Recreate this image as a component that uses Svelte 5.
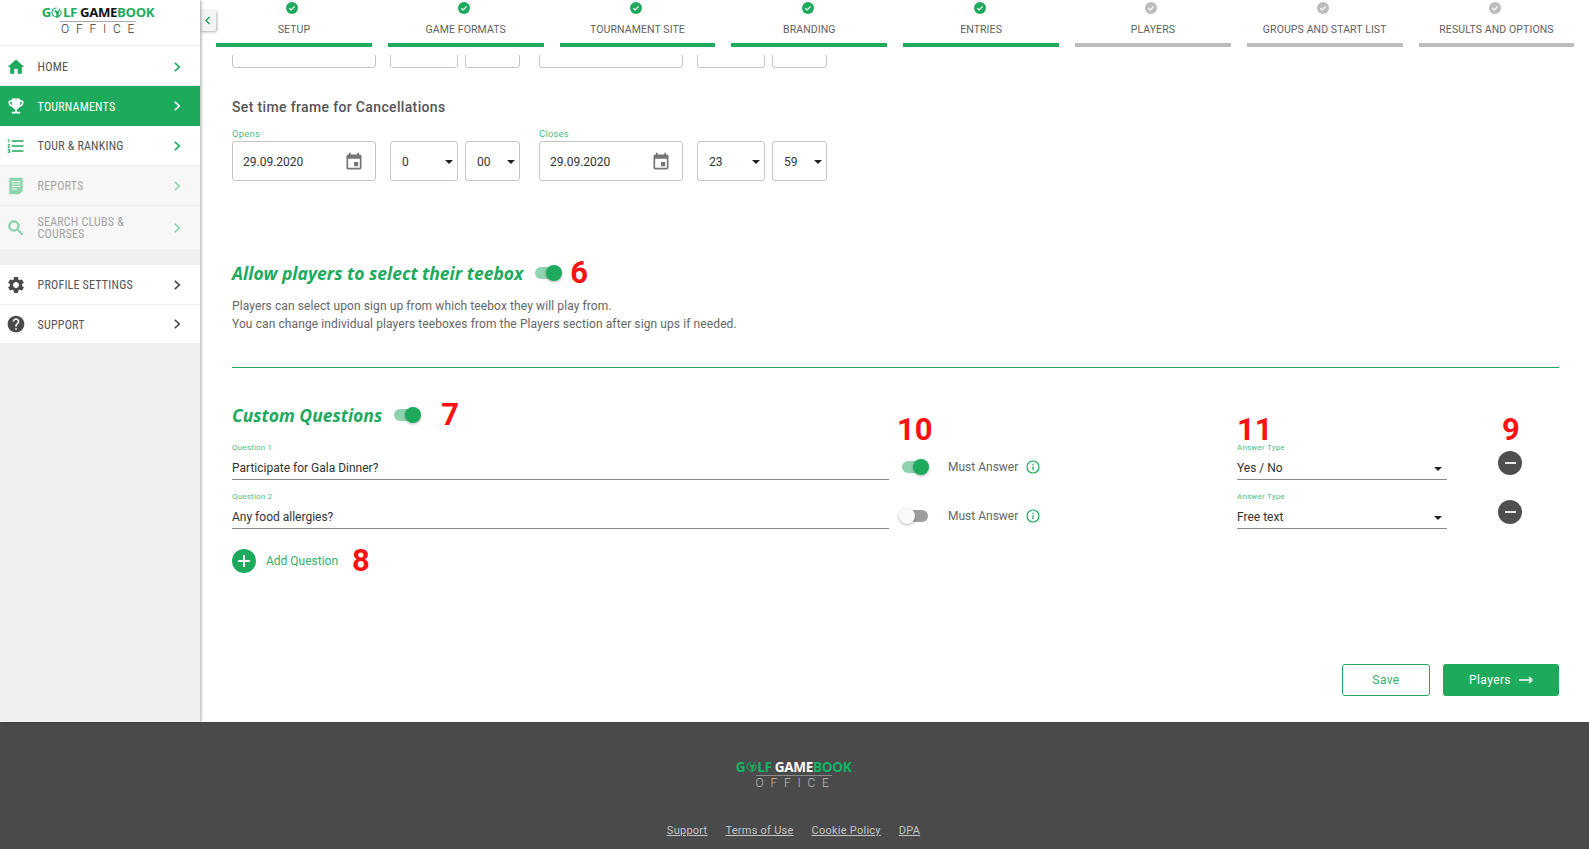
<script>
	const nav = [
		{ label: 'HOME', icon: 'home' },
		{ label: 'TOURNAMENTS', icon: 'trophy', active: true },
		{ label: 'TOUR & RANKING', icon: 'list' },
		{ label: 'REPORTS', icon: 'report', off: true },
		{ label: 'SEARCH CLUBS & COURSES', icon: 'search', off: true, tall: true }
	];
	const nav2 = [
		{ label: 'PROFILE SETTINGS', icon: 'gear', dark: true },
		{ label: 'SUPPORT', icon: 'help', dark: true }
	];
	const icons = {
		home: 'M10 20v-6h4v6h5v-8h3L12 3 2 12h3v8z',
		trophy: 'M19 5h-2V3H7v2H5c-1.1 0-2 .9-2 2v1c0 2.55 1.92 4.63 4.39 4.94.63 1.5 1.98 2.63 3.61 2.96V19H7v2h10v-2h-4v-3.1c1.63-.33 2.98-1.46 3.61-2.96C19.08 12.63 21 10.55 21 8V7c0-1.1-.9-2-2-2zM5 8V7h2v3.82C5.84 10.4 5 9.3 5 8zm14 0c0 1.3-.84 2.4-2 2.82V7h2v1z',
		list: 'M2 17h2v.5H3v1h1v.5H2v1h3v-4H2v1zm1-9h1V4H2v1h1v3zm-1 3h1.8L2 13.1v.9h3v-1H3.2L5 10.9V10H2v1zm5-6v2h14V5H7zm0 14h14v-2H7v2zm0-6h14v-2H7v2z',
		report: 'M4 2h16v16l-4 4H4zM7 6v1.2h10V6zm0 3v1.2h10V9zm0 3v1.2h10V12zm0 3v1.2h6V15z',
		search: 'M15.5 14h-.79l-.28-.27C15.41 12.59 16 11.11 16 9.5 16 5.91 13.09 3 9.5 3S3 5.91 3 9.5 5.91 16 9.5 16c1.61 0 3.09-.59 4.23-1.57l.27.28v.79l5 4.99L20.49 19l-4.99-5zm-6 0C7.01 14 5 11.99 5 9.5S7.01 5 9.5 5 14 7.01 14 9.5 11.99 14 9.5 14z',
		gear: 'M19.14 12.94c.04-.3.06-.61.06-.94 0-.32-.02-.64-.07-.94l2.03-1.58c.18-.14.23-.41.12-.61l-1.92-3.32c-.12-.22-.37-.29-.59-.22l-2.39.96c-.5-.38-1.03-.7-1.62-.94l-.36-2.54c-.04-.24-.24-.41-.48-.41h-3.84c-.24 0-.43.17-.47.41l-.36 2.54c-.59.24-1.13.57-1.62.94l-2.39-.96c-.22-.08-.47 0-.59.22L2.74 8.87c-.12.21-.08.47.12.61l2.03 1.58c-.05.3-.09.63-.09.94s.02.64.07.94l-2.03 1.58c-.18.14-.23.41-.12.61l1.92 3.32c.12.22.37.29.59.22l2.39-.96c.5.38 1.03.7 1.62.94l.36 2.54c.05.24.24.41.48.41h3.84c.24 0 .44-.17.47-.41l.36-2.54c.59-.24 1.13-.56 1.62-.94l2.39.96c.22.08.47 0 .59-.22l1.92-3.32c.12-.22.07-.47-.12-.61l-2.01-1.58zM12 15.6c-1.98 0-3.6-1.62-3.6-3.6s1.62-3.6 3.6-3.6 3.6 1.62 3.6 3.6-1.62 3.6-3.6 3.6z',
		help: 'M12 2C6.48 2 2 6.48 2 12s4.48 10 10 10 10-4.48 10-10S17.52 2 12 2zm1 17h-2v-2h2v2zm2.07-7.75l-.9.92C13.45 12.9 13 13.5 13 15h-2v-.5c0-1.1.45-2.1 1.17-2.83l1.24-1.26c.37-.36.59-.86.59-1.41 0-1.1-.9-2-2-2s-2 .9-2 2H8c0-2.21 1.79-4 4-4s4 1.79 4 4c0 .88-.36 1.68-.93 2.25z'
	};
	const calendar = 'M17 12h-5v5h5v-5zM16 1v2H8V1H6v2H5c-1.11 0-1.99.9-1.99 2L3 19c0 1.1.89 2 2 2h14c1.1 0 2-.9 2-2V5c0-1.1-.9-2-2-2h-1V1h-2zm3 18H5V8h14v11z';
	const steps = [
		{ label: 'SETUP', done: true },
		{ label: 'GAME FORMATS', done: true },
		{ label: 'TOURNAMENT SITE', done: true },
		{ label: 'BRANDING', done: true },
		{ label: 'ENTRIES', done: true },
		{ label: 'PLAYERS' },
		{ label: 'GROUPS AND START LIST' },
		{ label: 'RESULTS AND OPTIONS' }
	];
	const questions = [
		{ label: 'Question 1', text: 'Participate for Gala Dinner?', must: true, type: 'Yes / No' },
		{ label: 'Question 2', text: 'Any food allergies?', must: false, type: 'Free text' }
	];
	const links = ['Support', 'Terms of Use', 'Cookie Policy', 'DPA'];
</script>

{#snippet logo()}
	<div class="logo">
		<div class="logo-name">
			<span class="g">G</span><svg class="golfer" viewBox="0 0 14 14" width="11" height="13"><path d="M7 1.2a5.8 5.8 0 1 0 5.2 3.2" fill="none" stroke="#1daa5d" stroke-width="1.4" /><path d="M5 3.5l2.5 2 2-1.2L11 1.5l1 .6-1.6 4L9.6 9l.6 4H6.6l.4-4.2L4.4 5z" fill="#1daa5d" /></svg><span class="g">LF</span>
			<span class="game">GAME</span><span class="g book">BOOK</span>
		</div>
		<div class="logo-sub">OFFICE</div>
	</div>
{/snippet}

{#snippet navItem(item)}
	<a class="nav-item" class:active={item.active} class:off={item.off} class:tall={item.tall} class:dark={item.dark} href="#top">
		<svg class="nav-icon {item.icon}" viewBox="0 0 24 24" width="20" height="20"><path d={icons[item.icon]} /></svg>
		<span class="nav-label">{item.label}</span>
		<svg class="chev" viewBox="0 0 10 12" width="9" height="12"><path d="M2 1.5L7 6l-5 4.5" fill="none" stroke-width="1.8" /></svg>
	</a>
{/snippet}

{#snippet dateBox(value, label)}
	<div class="date">
		{#if label}<span class="tiny">{label}</span>{/if}
		<div class="box date-box">
			<span>{value}</span>
			{#if value}
				<svg viewBox="0 0 24 24" width="20" height="20"><path d={calendar} fill="#757575" /></svg>
			{/if}
		</div>
	</div>
{/snippet}

{#snippet timeBox(value, cls)}
	<div class="box time-box {cls}">
		<span>{value}</span>
		{#if value}<i class="caret"></i>{/if}
	</div>
{/snippet}

{#snippet toggle(on)}
	<span class="toggle" class:on><span class="knob"></span></span>
{/snippet}

<div class="page">
	<div class="shell">
		<aside class="sidebar">
			<div class="brand">{@render logo()}</div>
			<nav class="nav-group">
				{#each nav as item}{@render navItem(item)}{/each}
			</nav>
			<nav class="nav-group second">
				{#each nav2 as item}{@render navItem(item)}{/each}
			</nav>
		</aside>

		<main class="main">
			<button class="collapse" aria-label="Collapse">
				<svg viewBox="0 0 10 12" width="8" height="11"><path d="M7 1.5L2.5 6 7 10.5" fill="none" stroke="#1daa5d" stroke-width="1.8" /></svg>
			</button>

			<header class="stepper">
				{#each steps as step}
					<div class="step" class:done={step.done}>
						<svg viewBox="0 0 12 12" width="12" height="12"><circle cx="6" cy="6" r="6" class="dot" /><path d="M3.3 6.2l1.9 1.8 3.5-3.7" fill="none" stroke="#fff" stroke-width="1.2" /></svg>
						<span class="step-label">{step.label}</span>
						<span class="step-bar"></span>
					</div>
				{/each}
			</header>

			<section class="content">
				<div class="time-row clipped">
					{@render dateBox('', '')}
					{@render timeBox('', 'hours')}
					{@render timeBox('', 'mins')}
					{@render dateBox('', '')}
					{@render timeBox('', 'hours')}
					{@render timeBox('', 'mins')}
				</div>

				<h3 class="sub">Set time frame for Cancellations</h3>

				<div class="time-row">
					{@render dateBox('29.09.2020', 'Opens')}
					{@render timeBox('0', 'hours')}
					{@render timeBox('00', 'mins')}
					{@render dateBox('29.09.2020', 'Closes')}
					{@render timeBox('23', 'hours')}
					{@render timeBox('59', 'mins')}
				</div>

				<div class="title-row teebox">
					<h2>Allow players to select their teebox</h2>
					{@render toggle(true)}
					<span class="note">6</span>
				</div>
				<p class="copy">
					Players can select upon sign up from which teebox they will play from.<br />
					You can change individual players teeboxes from the Players section after sign ups if needed.
				</p>

				<hr />

				<div class="questions-wrap">
					<span class="note over n10">10</span>
					<span class="note over n11">11</span>
					<span class="note over n9">9</span>

					<div class="title-row custom">
						<h2>Custom Questions</h2>
						{@render toggle(true)}
						<span class="note seven">7</span>
					</div>

					{#each questions as q}
						<div class="question">
							<div class="field">
								<span class="micro">{q.label}</span>
								<div class="line">{q.text}</div>
							</div>
							<div class="must">
								{@render toggle(q.must)}
								<span class="must-label">Must Answer</span>
								<svg viewBox="0 0 14 14" width="14" height="14"><circle cx="7" cy="7" r="6" fill="none" stroke="#1daa5d" stroke-width="1.2" /><path d="M7 6.2v4M7 3.7v1.4" stroke="#1daa5d" stroke-width="1.3" /></svg>
							</div>
							<div class="field">
								<span class="micro">Answer Type</span>
								<div class="line select">{q.type}<i class="caret"></i></div>
							</div>
							<button class="minus" aria-label="Remove"><span></span></button>
						</div>
					{/each}

					<div class="add-row">
						<span class="plus"></span>
						<span class="add-label">Add Question</span>
						<span class="note eight">8</span>
					</div>
				</div>

				<div class="actions">
					<button class="btn ghost">Save</button>
					<button class="btn solid">
						Players
						<svg viewBox="0 0 14 8" width="14" height="8"><path d="M0 4h12.5M10 1l3 3-3 3" fill="none" stroke="#fff" stroke-width="1.5" /></svg>
					</button>
				</div>
			</section>
		</main>
	</div>

	<footer class="footer">
		{@render logo()}
		<div class="links">
			{#each links as link}<a href="#top">{link}</a>{/each}
		</div>
	</footer>
</div>

<style>
	:global(body) {
		margin: 0;
		background: #fff;
		font-family: Roboto, 'Liberation Sans', sans-serif;
		color: #4a4a4a;
	}

	.page {
		width: 1589px;
		height: 849px;
		display: flex;
		flex-direction: column;
		overflow: hidden;
	}

	.shell {
		display: flex;
		height: 722px;
	}

	/* sidebar */
	.sidebar {
		width: 200px;
		flex: none;
		background: #f0f0f0;
		box-shadow: 1px 0 3px rgba(0, 0, 0, 0.35);
		position: relative;
		z-index: 2;
	}

	.brand {
		height: 45px;
		background: #fff;
		border-bottom: 1px solid #eee;
		display: flex;
		justify-content: center;
		align-items: flex-start;
		padding-right: 4px;
	}

	.logo {
		width: 113px;
		display: flex;
		flex-direction: column;
		align-items: center;
		padding-top: 5px;
	}

	.logo-name {
		display: flex;
		align-items: center;
		height: 15px;
		font-family: 'Open Sans', sans-serif;
		font-weight: 700;
		font-size: 13.2px;
		letter-spacing: -0.35px;
		line-height: 15px;
		white-space: nowrap;
		color: #111;
	}

	.g {
		color: #1daa5d;
	}

	.game {
		margin-left: 3px;
	}

	.golfer {
		margin: 0 0.5px;
	}

	.logo-sub {
		width: 76px;
		border-top: 1px solid #aaa;
		margin-top: 1px;
		font-size: 12px;
		line-height: 15px;
		font-weight: 300;
		letter-spacing: 6.8px;
		text-indent: 1px;
		white-space: nowrap;
		color: #333;
	}

	.nav-group {
		display: flex;
		flex-direction: column;
	}

	.second {
		margin-top: 16px;
	}

	.nav-item {
		height: 40px;
		box-sizing: border-box;
		display: flex;
		align-items: center;
		padding: 0 18px 0 6px;
		background: #fff;
		border-bottom: 1px solid #eee;
		text-decoration: none;
		color: #555;
		fill: #1daa5d;
		stroke: #1daa5d;
	}

	.nav-group:not(.second) .nav-item:first-child {
		padding-top: 2px;
	}

	.nav-item.tall {
		height: 43px;
		border-bottom: 0;
	}

	.nav-item.dark {
		fill: #4a4a4a;
		stroke: #4a4a4a;
	}

	.nav-item.dark:last-child {
		height: 38px;
		border-bottom: 0;
	}

	.nav-item.active {
		background: #1daa5d;
		color: #fff;
		fill: #fff;
		stroke: #fff;
		border-bottom: 0;
	}

	.nav-item.off {
		background: #f7f7f7;
		color: #a4a4a4;
		fill: #8ed4ae;
		stroke: #8ed4ae;
	}

	.nav-icon {
		stroke: none;
		flex: none;
		margin-right: 11.6px;
	}

	.nav-icon.search {
		stroke: #8ed4ae;
		stroke-width: 0.9;
	}

	.nav-label {
		flex: 1;
		font-size: 12px;
		line-height: 12px;
		letter-spacing: 0.2px;
		font-family: 'Roboto Condensed', 'Liberation Sans Narrow', Roboto, sans-serif;
		max-width: 100px;
		margin-right: auto;
		padding-top: 1px;
	}

	.chev {
		flex: none;
		margin-left: auto;
	}

	/* main */
	.main {
		flex: 1;
		display: flex;
		flex-direction: column;
		position: relative;
		min-width: 0;
	}

	.collapse {
		position: absolute;
		left: 0;
		top: 10px;
		width: 16px;
		height: 21px;
		padding: 0;
		border: 0;
		border-radius: 0 2px 2px 0;
		background: #f4f4f4;
		box-shadow: 1px 1px 3px rgba(0, 0, 0, 0.3);
		display: flex;
		align-items: center;
		justify-content: center;
	}

	.stepper {
		height: 55px;
		flex: none;
		display: flex;
		gap: 16px;
		padding-left: 16px;
		box-sizing: border-box;
	}

	.step {
		width: 155.8px;
		height: 47px;
		display: flex;
		flex-direction: column;
		align-items: center;
		padding-top: 2px;
		box-sizing: border-box;
	}

	.step svg {
		flex: none;
		margin-left: -3px;
	}

	.dot {
		fill: #bdbdbd;
	}

	.done .dot {
		fill: #1daa5d;
	}

	.step-label {
		font-size: 10.5px;
		line-height: 13px;
		margin-top: 9px;
		color: #5f5f5f;
		letter-spacing: 0.1px;
	}

	.step-bar {
		width: 100%;
		height: 4px;
		margin-top: auto;
		background: #bdbdbd;
	}

	.done .step-bar {
		background: #1daa5d;
	}

	.content {
		flex: 1;
		padding: 0 30px 0 32px;
		display: flex;
		flex-direction: column;
	}

	.time-row {
		display: flex;
		align-items: flex-end;
	}

	.clipped {
		height: 13px;
		overflow: hidden;
		flex: none;
	}

	.sub {
		margin: 30px 0 0;
		font-size: 14px;
		line-height: 18px;
		font-weight: 500;
		color: #555;
		letter-spacing: 0.35px;
	}

	.sub + .time-row {
		margin-top: 12px;
	}

	.tiny {
		display: block;
		font-size: 9.5px;
		line-height: 12px;
		color: #4fbd82;
		letter-spacing: 0.2px;
		margin-bottom: 1px;
	}

	.box {
		height: 40px;
		box-sizing: border-box;
		border: 1px solid #c4c4c4;
		border-radius: 3px;
		display: flex;
		align-items: center;
		justify-content: space-between;
		font-size: 12px;
		color: #333;
		background: #fff;
		padding-top: 2px;
	}

	.date {
		width: 144px;
		margin-right: 14px;
	}

	.date-box {
		padding-left: 10px;
		padding-right: 11px;
	}

	.time-box {
		padding-left: 11px;
		padding-right: 4px;
	}

	.hours {
		width: 68px;
		margin-right: 7px;
	}

	.mins {
		width: 55px;
		margin-right: 19px;
	}

	.caret {
		width: 0;
		height: 0;
		border-left: 4px solid transparent;
		border-right: 4px solid transparent;
		border-top: 4px solid #222;
	}

	.title-row {
		display: flex;
		align-items: center;
	}

	.title-row h2 {
		margin: 0 11px 0 0;
		font-family: 'Open Sans', sans-serif;
		font-style: italic;
		font-weight: 700;
		font-size: 17.5px;
		line-height: 24px;
		color: #1daa5d;
	}

	.teebox {
		margin-top: 77px;
	}

	.toggle {
		display: inline-block;
		width: 28px;
		height: 16px;
		flex: none;
		position: relative;
	}

	.toggle::before {
		content: '';
		position: absolute;
		left: 1px;
		right: 1px;
		top: 2px;
		height: 12px;
		border-radius: 6px;
		background: #9e9e9e;
	}

	.toggle.on::before {
		background: #8fd4af;
	}

	.knob {
		position: absolute;
		left: -2px;
		top: 0;
		width: 16px;
		height: 16px;
		border-radius: 50%;
		background: #fafafa;
		box-shadow: 0 1px 3px rgba(0, 0, 0, 0.3);
	}

	.on .knob {
		left: 12px;
		background: #1daa5d;
	}

	.note {
		color: #fe1111;
		font-family: Roboto, sans-serif;
		font-weight: 700;
		font-size: 31px;
		line-height: 30px;
		margin-left: 8px;
	}

	.copy {
		margin: 9px 0 0;
		font-size: 12px;
		line-height: 18px;
		color: #666;
		letter-spacing: 0.1px;
	}

	hr {
		width: 100%;
		margin: 34px 0 0;
		border: 0;
		border-top: 1px solid #1daa5d;
		flex: none;
	}

	.questions-wrap {
		position: relative;
	}

	.custom {
		margin-top: 32px;
	}

	.seven {
		margin-left: 20px;
	}

	.over {
		position: absolute;
		top: 51px;
		margin: 0;
		line-height: 22px;
	}

	.n10 {
		left: 665px;
	}

	.n11 {
		left: 1005px;
	}

	.n9 {
		left: 1270px;
	}

	.question {
		display: grid;
		grid-template-columns: 657px 348px 210px 24px;
		height: 49px;
	}

	.custom + .question {
		margin-top: 12px;
	}

	.field {
		height: 38px;
		display: flex;
		flex-direction: column;
	}

	.micro {
		font-size: 8px;
		line-height: 12px;
		color: #4fbd82;
		letter-spacing: 0.2px;
	}

	.line {
		flex: 1;
		box-sizing: border-box;
		display: flex;
		align-items: flex-end;
		justify-content: space-between;
		padding-bottom: 4px;
		border-bottom: 1px solid #8a8a8a;
		font-size: 12px;
		line-height: 14px;
		color: #333;
	}

	.select {
		padding-right: 5px;
	}

	.select .caret {
		margin-bottom: 4px;
	}

	.must {
		display: flex;
		align-items: center;
		height: 49px;
		padding-left: 12px;
	}

	.must-label {
		font-size: 12px;
		color: #666;
		margin: 0 8px 0 19px;
	}

	.minus {
		width: 24px;
		height: 24px;
		margin: 9px 0 0 51px;
		padding: 0;
		border: 0;
		border-radius: 50%;
		background: #4f4f4f;
		display: flex;
		align-items: center;
		justify-content: center;
	}

	.minus span {
		width: 11px;
		height: 2px;
		background: #e8e8e8;
	}

	.add-row {
		display: flex;
		align-items: center;
		height: 24px;
		margin-top: 9px;
	}

	.plus {
		width: 24px;
		height: 24px;
		border-radius: 50%;
		background:
			linear-gradient(#fff, #fff) center / 12px 2px no-repeat,
			linear-gradient(#fff, #fff) center / 2px 12px no-repeat,
			#1daa5d;
	}

	.add-label {
		margin-left: 10px;
		font-size: 12px;
		color: #2fb16c;
	}

	.eight {
		margin-left: 14px;
	}

	.actions {
		margin-top: auto;
		margin-bottom: 26px;
		display: flex;
		justify-content: flex-end;
		gap: 13px;
	}

	.btn {
		height: 32px;
		box-sizing: border-box;
		border-radius: 3px;
		font-family: Roboto, sans-serif;
		font-size: 12px;
		letter-spacing: 0.4px;
		display: flex;
		align-items: center;
		justify-content: center;
		gap: 8px;
	}

	.ghost {
		width: 88px;
		background: #fff;
		border: 1px solid #1daa5d;
		color: #2fb16c;
	}

	.solid {
		width: 116px;
		background: #1daa5d;
		border: 0;
		color: #fff;
	}

	/* footer */
	.footer {
		height: 127px;
		flex: none;
		background: #4a4a4a;
		display: flex;
		flex-direction: column;
		align-items: center;
		padding-top: 37px;
		box-sizing: border-box;
	}

	.footer .logo {
		padding-top: 0;
		width: 116px;
		margin-right: 2px;
	}

	.footer .logo-name {
		color: #fff;
		font-size: 13.6px;
	}

	.footer .g {
		color: #10b566;
	}

	.footer .logo-sub {
		color: #bdbdbd;
		border-top-color: #8a8a8a;
		text-indent: 0;
	}

	.links {
		display: flex;
		gap: 18px;
		margin-top: 33px;
		padding-right: 2px;
	}

	.links a {
		font-size: 11px;
		line-height: 14px;
		color: #c4c4c4;
		letter-spacing: 0.25px;
	}
</style>
